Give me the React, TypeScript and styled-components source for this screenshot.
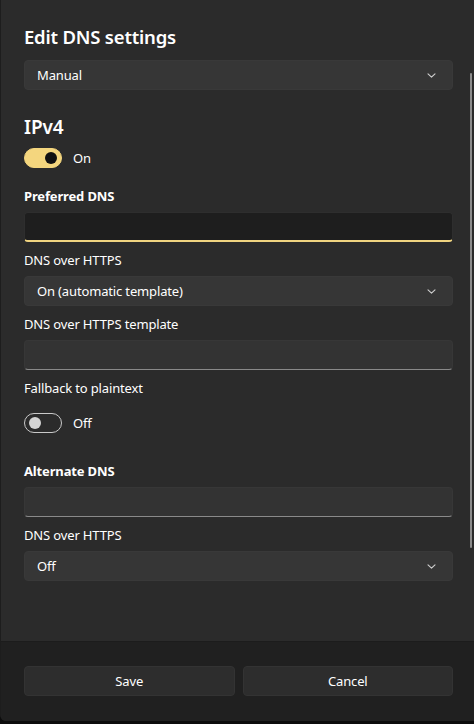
import React from "react";
import styled, {createGlobalStyle} from "styled-components";

const GlobalStyle = createGlobalStyle`
    html, body {
        margin: 0;
        padding: 0;
        background: #0c0c0c;
    }
    body {
        font-family: "Noto Sans", "Open Sans", sans-serif;
        color: #ffffff;
    }
`;

const Dialog = styled.div`
    position: relative;
    width: 473px;
    height: 721px;
    display: flex;
    flex-direction: column;
    background: #2b2b2b;
    border-left: 1px solid #1d1d1d;
    border-bottom-left-radius: 6px;
    overflow: hidden;
`;

const Body = styled.div`
    flex: 1;
    padding: 23px 21px 0 23px;
    display: flex;
    flex-direction: column;
    letter-spacing: -0.15px;
`;

const Title = styled.h1`
    margin: 0;
    font-size: 18.5px;
    line-height: 28px;
    font-weight: 600;
    letter-spacing: -0.2px;
`;

const Heading = styled.h2`
    margin: 23px 0 0;
    font-size: 19px;
    line-height: 28px;
    font-weight: 600;
`;

const Select = styled.div<{ $top?: number }>`
    margin-top: ${p => p.$top ?? 6}px;
    height: 30px;
    border-radius: 4px;
    background: #363636;
    border: 1px solid #393939;
    box-sizing: border-box;
    display: flex;
    align-items: center;
    justify-content: space-between;
    padding: 0 16px 0 12px;
    font-size: 13px;
`;

const SelectText = styled.span`
    color: #ffffff;
`;

const Input = styled.div<{ $focused?: boolean }>`
    margin-top: 6px;
    height: 30px;
    box-sizing: border-box;
    border-radius: 4px;
    background: ${p => p.$focused ? "#1e1e1e" : "#333333"};
    border: 1px solid ${p => p.$focused ? "#2e2e2e" : "#373737"};
    border-bottom: ${p => p.$focused ? "2px solid #f0d480" : "1px solid #8a8a8a"};
`;

const Label = styled.div<{ $bold?: boolean; $top?: number }>`
    margin-top: ${p => p.$top ?? 8}px;
    font-size: 13px;
    line-height: 20px;
    font-weight: ${p => p.$bold ? 700 : 400};
    color: #ffffff;
`;

const ToggleRow = styled.div<{ $top: number }>`
    margin-top: ${p => p.$top}px;
    display: flex;
    align-items: center;
    gap: 11px;
    font-size: 13px;
`;

const Track = styled.div<{ $on: boolean }>`
    width: 38px;
    height: 20px;
    box-sizing: border-box;
    border-radius: 10px;
    padding: 0 4px;
    display: flex;
    align-items: center;
    justify-content: ${p => p.$on ? "flex-end" : "flex-start"};
    background: ${p => p.$on ? "#f4d67e" : "transparent"};
    border: 1px solid ${p => p.$on ? "#f4d67e" : "#c9c9c9"};
`;

const Knob = styled.div<{ $on: boolean }>`
    width: 12px;
    height: 12px;
    border-radius: 50%;
    background: ${p => p.$on ? "#111111" : "#d4d4d4"};
`;

const Footer = styled.div`
    height: 80px;
    box-sizing: border-box;
    background: #202020;
    border-top: 1px solid #1c1c1c;
    padding: 24px 21px 0 23px;
    display: grid;
    grid-template-columns: 1fr 1fr;
    gap: 8px;
    align-content: start;
`;

const Button = styled.button`
    height: 30px;
    border-radius: 4px;
    background: #2d2d2d;
    border: 1px solid #333333;
    color: #ffffff;
    font-family: "Noto Sans", "Open Sans", sans-serif;
    font-size: 13px;
    letter-spacing: -0.15px;
`;

const ScrollBar = styled.div`
    position: absolute;
    right: 2px;
    top: 73px;
    width: 2px;
    height: 475px;
    border-radius: 1px;
    background: #8c8c8c;
`;

function Chevron() {
    return (
        <svg width="9" height="5" viewBox="0 0 9 5">
            <path d="M1 0.8 L4.5 4.2 L8 0.8" fill="none" stroke="#cfcfcf" strokeWidth="1.1" strokeLinecap="round" strokeLinejoin="round"/>
        </svg>
    );
}

function Dropdown({value, top}: { value: string; top?: number }) {
    return (
        <Select $top={top}>
            <SelectText>{value}</SelectText>
            <Chevron/>
        </Select>
    );
}

function Toggle({on, text, top}: { on: boolean; text: string; top: number }) {
    return (
        <ToggleRow $top={top}>
            <Track $on={on}><Knob $on={on}/></Track>
            <span>{text}</span>
        </ToggleRow>
    );
}

export default function App() {
    return (
        <Dialog>
            <GlobalStyle/>
            <Body>
                <Title>Edit DNS settings</Title>
                <Dropdown value="Manual" top={9}/>

                <Heading>IPv4</Heading>
                <Toggle on={true} text="On" top={7}/>

                <Label $bold $top={18}>Preferred DNS</Label>
                <Input $focused/>
                <Label>DNS over HTTPS</Label>
                <Dropdown value="On (automatic template)"/>
                <Label>DNS over HTTPS template</Label>
                <Input/>
                <Label>Fallback to plaintext</Label>
                <Toggle on={false} text="Off" top={15}/>

                <Label $bold $top={28}>Alternate DNS</Label>
                <Input/>
                <Label>DNS over HTTPS</Label>
                <Dropdown value="Off"/>
            </Body>
            <Footer>
                <Button>Save</Button>
                <Button>Cancel</Button>
            </Footer>
            <ScrollBar/>
        </Dialog>
    );
}
